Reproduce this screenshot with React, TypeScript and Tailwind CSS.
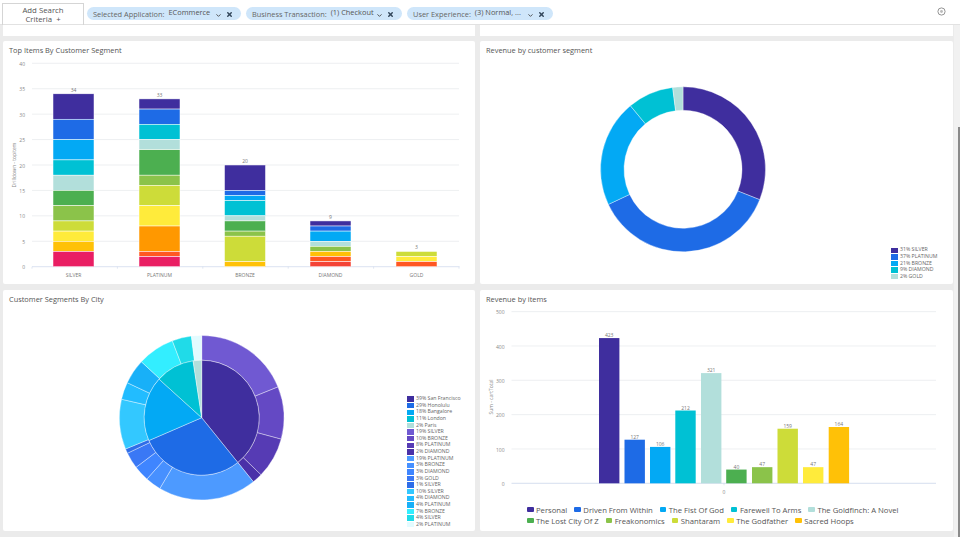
import { ChevronDown, X } from "lucide-react";

const INDIGO = "#3f2e9e";
const BLUE = "#1e6be6";
const SKY = "#03a9f4";
const CYAN = "#00c1d4";
const PALE = "#b2dfdb";
const GREEN = "#4caf50";
const LGREEN = "#8bc34a";
const LIME = "#cddc39";
const YELLOW = "#ffeb3b";
const AMBER = "#ffc107";
const ORANGE = "#ff9800";
const DEEP = "#ff5722";
const RED = "#f44336";
const PINK = "#e91e63";

type Seg = [number, string];

const segmentBars: { name: string; x: number; total: number; segs: Seg[] }[] = [
  {
    name: "SILVER",
    x: 53,
    total: 34,
    segs: [[5, INDIGO], [4, BLUE], [4, SKY], [3, CYAN], [3, PALE], [3, GREEN], [3, LGREEN], [2, LIME], [2, YELLOW], [2, AMBER], [3, PINK]],
  },
  {
    name: "PLATINUM",
    x: 139,
    total: 33,
    segs: [[2, INDIGO], [3, BLUE], [3, CYAN], [2, PALE], [5, GREEN], [2, LGREEN], [4, LIME], [4, YELLOW], [5, ORANGE], [1, DEEP], [2, PINK]],
  },
  {
    name: "BRONZE",
    x: 224.5,
    total: 20,
    segs: [[5, INDIGO], [1, BLUE], [1, SKY], [3, CYAN], [1, PALE], [2, GREEN], [1, LGREEN], [5, LIME], [1, AMBER]],
  },
  {
    name: "DIAMOND",
    x: 310,
    total: 9,
    segs: [[1, INDIGO], [1, BLUE], [2, SKY], [1, PALE], [1, LGREEN], [1, AMBER], [1, DEEP], [1, RED]],
  },
  { name: "GOLD", x: 396, total: 3, segs: [[1, LIME], [1, YELLOW], [1, DEEP]] },
];

const donut: { label: string; value: number; color: string }[] = [
  { label: "31% SILVER", value: 31, color: INDIGO },
  { label: "37% PLATINUM", value: 37, color: BLUE },
  { label: "21% BRONZE", value: 21, color: SKY },
  { label: "9% DIAMOND", value: 9, color: CYAN },
  { label: "2% GOLD", value: 2, color: PALE },
];

const cityInner = [
  { label: "39% San Francisco", value: 39.2, color: INDIGO },
  { label: "29% Honolulu", value: 29.3, color: BLUE },
  { label: "18% Bangalore", value: 18.2, color: SKY },
  { label: "11% London", value: 10.9, color: CYAN },
  { label: "2% Paris", value: 2.4, color: PALE },
];

const cityOuter = [
  { label: "19% SILVER", value: 18.9, color: "#7059d2" },
  { label: "10% BRONZE", value: 10.3, color: "#6449c4" },
  { label: "8% PLATINUM", value: 8, color: "#563bb4" },
  { label: "2% DIAMOND", value: 2, color: "#4a30a8" },
  { label: "19% PLATINUM", value: 19.3, color: "#4d9aff" },
  { label: "3% BRONZE", value: 3.1, color: "#4790ff" },
  { label: "3% DIAMOND", value: 3.1, color: "#3f85ff" },
  { label: "3% GOLD", value: 3.2, color: "#3a78f5" },
  { label: "1% SILVER", value: 0.9, color: "#2f6de8" },
  { label: "10% SILVER", value: 9.8, color: "#33c8ff" },
  { label: "4% DIAMOND", value: 3.4, color: "#22bcff" },
  { label: "4% PLATINUM", value: 4.9, color: "#18b0f8" },
  { label: "7% BRONZE", value: 7.3, color: "#33eeff" },
  { label: "4% SILVER", value: 3.8, color: "#20dbe8" },
  { label: "2% PLATINUM", value: 2, color: "#e3fbff" },
];

const items = [
  { name: "Personal", value: 423, color: INDIGO, x: 599 },
  { name: "Driven From Within", value: 127, color: BLUE, x: 624.5 },
  { name: "The Fist Of God", value: 106, color: SKY, x: 650 },
  { name: "Farewell To Arms", value: 212, color: CYAN, x: 675.3 },
  { name: "The Goldfinch: A Novel", value: 321, color: PALE, x: 701 },
  { name: "The Lost City Of Z", value: 40, color: GREEN, x: 726.2 },
  { name: "Freakonomics", value: 47, color: LGREEN, x: 752 },
  { name: "Shantaram", value: 159, color: LIME, x: 777.5 },
  { name: "The Godfather", value: 47, color: YELLOW, x: 803 },
  { name: "Sacred Hoops", value: 164, color: AMBER, x: 828.7 },
];

// slice of a ring, percentages clockwise from 12 o'clock
function arc(cx: number, cy: number, r0: number, r1: number, from: number, to: number) {
  const pt = (r: number, p: number) => {
    const a = (p / 100) * Math.PI * 2;
    return `${(cx + r * Math.sin(a)).toFixed(2)} ${(cy - r * Math.cos(a)).toFixed(2)}`;
  };
  const big = to - from > 50 ? 1 : 0;
  if (r0 === 0) return `M${cx} ${cy}L${pt(r1, from)}A${r1} ${r1} 0 ${big} 1 ${pt(r1, to)}Z`;
  return `M${pt(r0, from)}L${pt(r1, from)}A${r1} ${r1} 0 ${big} 1 ${pt(r1, to)}L${pt(r0, to)}A${r0} ${r0} 0 ${big} 0 ${pt(r0, from)}Z`;
}

function Ring({ cx, cy, r0, r1, data }: { cx: number; cy: number; r0: number; r1: number; data: { value: number; color: string }[] }) {
  let at = 0;
  return (
    <>
      {data.map((d, i) => {
        const from = at;
        at += d.value;
        return <path key={i} d={arc(cx, cy, r0, r1, from, at)} fill={d.color} stroke="#fff" strokeOpacity="0.75" strokeWidth="0.5" />;
      })}
    </>
  );
}

function Chip({ label, value }: { label: string; value: string }) {
  return (
    <div className="flex items-center h-[13px] rounded-full bg-[#cfe6fa] pl-[6px] pr-[8px] text-[7.4px] text-[#666] whitespace-nowrap">
      <span className="pt-[2px]">{label}</span>
      <span className="ml-[4px] pb-[2px] text-[#555]">{value}</span>
      <ChevronDown className="w-[7px] h-[7px] ml-auto mt-[3px] text-[#444]" strokeWidth={3} />
      <X className="w-[7px] h-[7px] ml-[4px] mt-[1px] text-[#33475b]" strokeWidth={5} />
    </div>
  );
}

function Card({ title, children }: { title: string; children: React.ReactNode }) {
  return (
    <section className="bg-white rounded-[2px] flex flex-col overflow-hidden">
      <h2 className="h-[18px] pl-[6px] pt-[3.5px] text-[7.4px] leading-[10px] text-[#555]">{title}</h2>
      {children}
    </section>
  );
}

function SideLegend({ rows }: { rows: { label: string; color: string }[] }) {
  return (
    <ul className="flex flex-col self-end">
      {rows.map((r) => (
        <li key={r.label} className="flex items-center h-[6.62px] text-[5.2px] text-[#666] whitespace-nowrap">
          <span className="w-[6.5px] h-[5.4px] mr-[2.5px] shrink-0" style={{ backgroundColor: r.color }} />
          {r.label}
        </li>
      ))}
    </ul>
  );
}

function LegendItem({ name, color }: { name: string; color: string }) {
  return (
    <span className="flex items-center gap-[2.5px] whitespace-nowrap">
      <span className="w-[6.5px] h-[5px] rounded-[1px] -mt-[2px]" style={{ backgroundColor: color }} />
      {name}
    </span>
  );
}

function SegmentChart() {
  const y0 = 266.7;
  const unit = 5.085;
  return (
    <svg viewBox="3 59 472 225" className="w-[472px] h-[225px]">
      {[0, 5, 10, 15, 20, 25, 30, 35, 40].map((v) => (
        <g key={v}>
          {v > 0 && <line x1="32" x2="459" y1={y0 - v * unit} y2={y0 - v * unit} stroke="#e9ebee" strokeWidth="0.8" />}
          <text x="25" y={y0 - v * unit + 2.6} textAnchor="end" fontSize="5" fill="#888">{v}</text>
        </g>
      ))}
      <line x1="32" x2="459.5" y1={y0} y2={y0} stroke="#ccd6eb" strokeWidth="0.7" />
      {[0, 1, 2, 3, 4, 5].map((i) => (
        <line key={i} x1={32 + i * 85.4} x2={32 + i * 85.4} y1={y0} y2={y0 + 2} stroke="#ccd6eb" strokeWidth="0.6" />
      ))}
      <text transform="translate(15.5 165) rotate(-90)" textAnchor="middle" fontSize="5" fill="#888">Drilldown - topitem</text>
      {segmentBars.map((b) => {
        let top = y0 - b.total * unit;
        return (
          <g key={b.name}>
            <text x={b.x + 20.5} y={top - 2} textAnchor="middle" fontSize="5" fill="#777">{b.total}</text>
            {b.segs.map(([n, color], i) => {
              const h = n * unit;
              const r = <rect key={i} x={b.x} y={top} width="41" height={h} fill={color} stroke="#fff" strokeWidth="0.5" />;
              top += h;
              return r;
            })}
            <text x={b.x + 20.5} y={y0 + 10.5} textAnchor="middle" fontSize="5" fill="#777">{b.name}</text>
          </g>
        );
      })}
    </svg>
  );
}

function ItemsChart() {
  const y0 = 483.3;
  const unit = 0.3433;
  return (
    <svg viewBox="480 308 473 197" className="w-[473px] h-[197px] shrink-0">
      {[0, 100, 200, 300, 400, 500].map((v) => (
        <g key={v}>
          <line x1="511.5" x2="936" y1={y0 - v * unit} y2={y0 - v * unit} stroke={v === 0 ? "#ccd6eb" : "#e9ebee"} strokeWidth="0.8" />
          <text x="504.5" y={y0 - v * unit + 2.6} textAnchor="end" fontSize="5" fill="#888">{v}</text>
        </g>
      ))}
      <text transform="translate(493 397) rotate(-90)" textAnchor="middle" fontSize="5" fill="#888">Sum - cartTotal</text>
      <line x1="724" x2="724" y1={y0} y2={y0 + 2} stroke="#ccd6eb" strokeWidth="0.6" />
      <text x="724" y="494" textAnchor="middle" fontSize="5" fill="#888">0</text>
      {items.map((it) => (
        <g key={it.name}>
          <rect x={it.x} y={y0 - it.value * unit} width="20.4" height={it.value * unit} fill={it.color} />
          <text x={it.x + 10.2} y={y0 - it.value * unit - 0.8} textAnchor="middle" fontSize="5" fill="#777">{it.value}</text>
        </g>
      ))}
    </svg>
  );
}

export default function App() {
  return (
    <div className="w-[960px] h-[537px] overflow-hidden flex flex-col bg-[#ebebeb] font-['Open_Sans',sans-serif]">
      <header className="h-[25px] shrink-0 bg-white border-b border-[#e2e2e2] flex items-start pl-[2px] pr-[14px]">
        <button className="mt-[3px] pt-[1px] w-[82px] h-[22px] border border-b-0 border-[#d5d5d5] text-[7.8px] leading-[9.5px] text-[#555] text-center">
          Add Search
          <br />
          Criteria&nbsp; +
        </button>
        <div className="flex gap-[5px] ml-[3px] mt-[7px]">
          <div className="w-[154px]"><Chip label="Selected Application:" value="ECommerce" /></div>
          <div className="w-[156px]"><Chip label="Business Transaction:" value="(1) Checkout" /></div>
          <div className="w-[146px]"><Chip label="User Experience:" value="(3) Normal, ..." /></div>
        </div>
        <svg viewBox="0 0 10 10" className="w-[9px] h-[9px] ml-auto mt-[7px]">
          <circle cx="5" cy="5" r="4" fill="none" stroke="#888" strokeWidth="1" />
          <circle cx="5" cy="5" r="1.6" fill="#bbb" />
        </svg>
      </header>

      <div className="flex-1 flex min-h-0">
        <main className="w-[954px] pl-[3px] pr-[1px] flex flex-col">
          <div className="grid grid-cols-[472px_473px] gap-x-[5px] h-[11px] mb-[5px]">
            <div className="bg-white" />
            <div className="bg-white" />
          </div>
          <div className="grid grid-cols-[472px_473px] grid-rows-[243px_241px] gap-x-[5px] gap-y-[6px]">
            <Card title="Top Items By Customer Segment">
              <SegmentChart />
            </Card>
            <Card title="Revenue by customer segment">
              <div className="flex flex-1">
                <svg viewBox="480 59 411 225" className="w-[411px] h-[225px] shrink-0">
                  <Ring cx={683} cy={169.3} r0={59} r1={82.5} data={donut} />
                </svg>
                <div className="self-end pb-[4px]">
                  <SideLegend rows={donut} />
                </div>
              </div>
            </Card>
            <Card title="Customer Segments By City">
              <div className="flex flex-1">
                <svg viewBox="3 308 404 223" className="w-[404px] h-[223px] shrink-0">
                  <Ring cx={201.7} cy={417.7} r0={57.5} r1={82.3} data={cityOuter} />
                  <Ring cx={201.7} cy={417.7} r0={0} r1={57.5} data={cityInner} />
                </svg>
                <div className="self-end pb-[3px]">
                  <SideLegend rows={[...cityInner, ...cityOuter]} />
                </div>
              </div>
            </Card>
            <Card title="Revenue by items">
              <ItemsChart />
              <div className="pl-[47px] text-[7.7px] leading-[11px] text-[#555]">
                <div className="flex gap-[7px]">
                  {items.slice(0, 5).map((it) => (
                    <LegendItem key={it.name} name={it.name} color={it.color} />
                  ))}
                </div>
                <div className="flex gap-[7px]">
                  {items.slice(5).map((it) => (
                    <LegendItem key={it.name} name={it.name} color={it.color} />
                  ))}
                </div>
              </div>
            </Card>
          </div>
        </main>
        <aside className="flex-1 pl-[4px] pt-[102px] bg-[#f1f1f1]">
          <div className="h-full bg-[#8a8a8a]" />
        </aside>
      </div>
    </div>
  );
}
